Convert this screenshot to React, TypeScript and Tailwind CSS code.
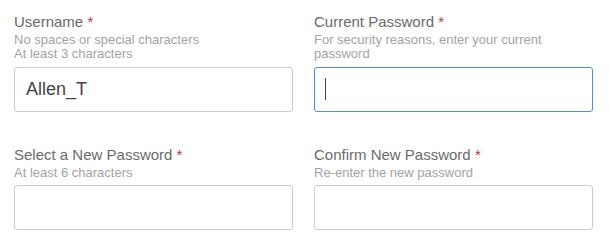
const fields = [
  {
    label: "Username",
    hints: ["No spaces or special characters", "At least 3 characters"],
    value: "Allen_T",
    focused: false,
  },
  {
    label: "Current Password",
    hints: ["For security reasons, enter your current password"],
    value: "",
    focused: true,
  },
  {
    label: "Select a New Password",
    hints: ["At least 6 characters"],
    value: "",
    focused: false,
  },
  {
    label: "Confirm New Password",
    hints: ["Re-enter the new password"],
    value: "",
    focused: false,
  },
];

export default function App() {
  return (
    <div
      className="w-[609px] h-[247px] bg-white pl-[14px] pt-[13px]"
      style={{ fontFamily: '"Liberation Sans", Arial, sans-serif' }}
    >
      <div className="grid grid-cols-[279px_279px] gap-x-[21px] gap-y-[34px]">
        {fields.map((field) => (
          <div key={field.label} className="flex flex-col">
            <label className="text-[15px] leading-[18px] text-[#6b6b6b]">
              {field.label} <span className="text-[#c0392b]">*</span>
            </label>
            <div className="mt-[2px] text-[13px] leading-[14.3px] text-[#a3a3a3]">
              {field.hints.map((hint) => (
                <div key={hint}>{hint}</div>
              ))}
            </div>
            <div
              className={
                field.focused
                  ? "mt-[5px] h-[45px] rounded-[3px] border border-[#4a90e2] flex items-center pl-[10px]"
                  : "mt-[5px] h-[45px] rounded-[3px] border border-[#cccccc] flex items-center pl-[11px]"
              }
            >
              {field.focused ? (
                <span className="block w-px h-[22px] bg-[#444]" />
              ) : (
                <span className="text-[18px] text-[#444]">{field.value}</span>
              )}
            </div>
          </div>
        ))}
      </div>
    </div>
  );
}
